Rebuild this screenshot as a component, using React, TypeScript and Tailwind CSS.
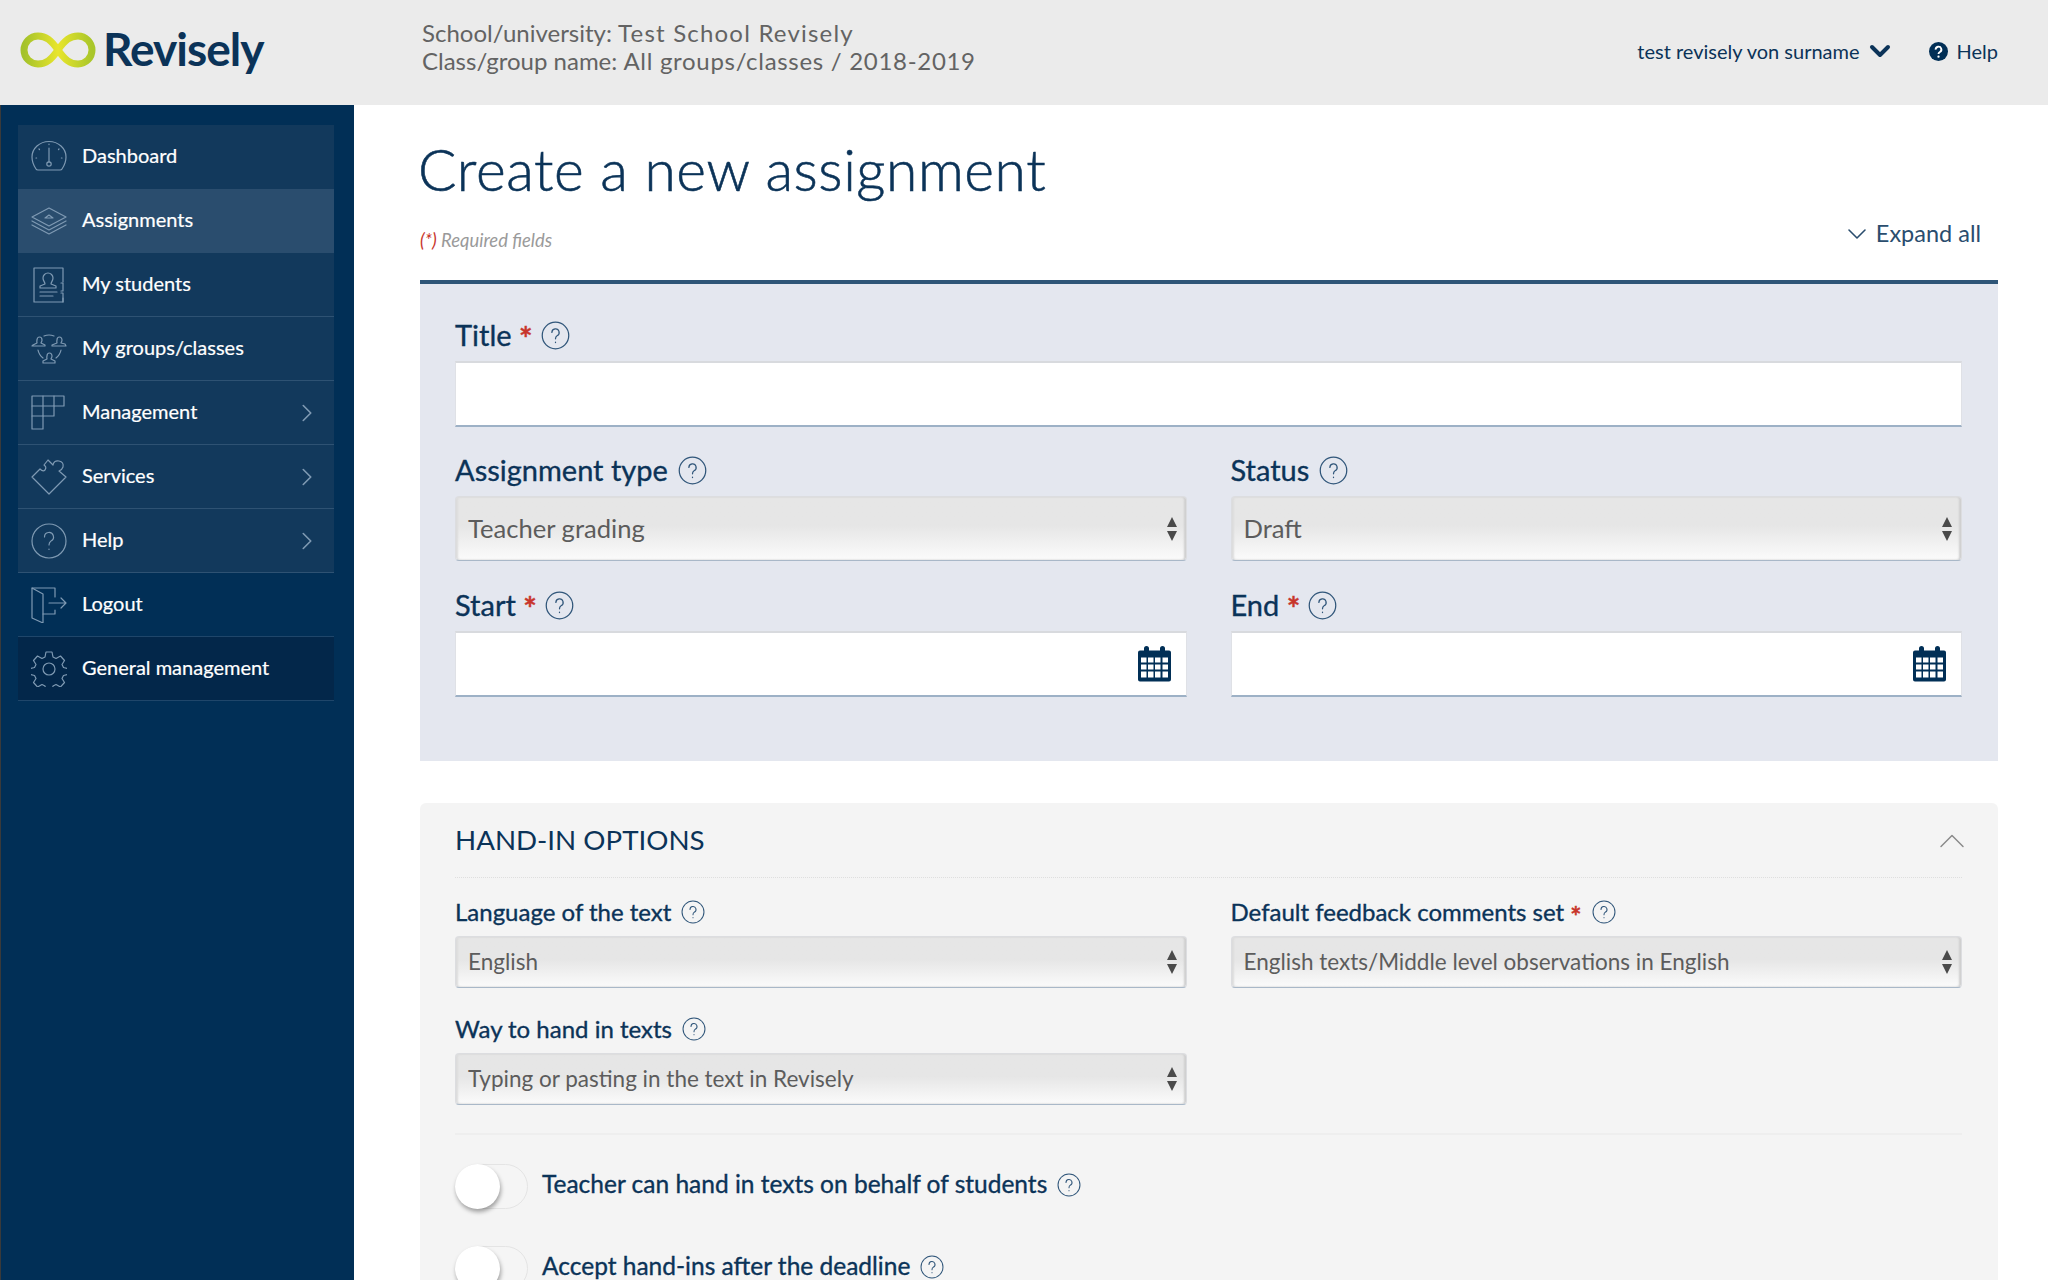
import React from 'react';
import { ChevronRight, ChevronDown, ChevronUp } from 'lucide-react';

const stroke = { fill: 'none', stroke: '#7f9ab3', strokeWidth: 1.2, strokeLinecap: 'round', strokeLinejoin: 'round' } as const;

const Dash = () => (
  <svg width="36" height="36" viewBox="0 0 36 36" {...stroke}>
    <path d="M5 30 Q1 24 1 18 a17 15.5 0 0 1 34 0 Q35 24 31 30 Q30.500 31 29 31 H7 Q5.500 31 5 30Z" />
    <path d="M18 9v14" /><circle cx="18" cy="25" r="2.200" />
    <path d="M18 5v.6M8 10l.5.5M28 10l-.5.5M5 19h.6M31 19h-.6" />
  </svg>
);
const Stack = () => (
  <svg width="36" height="36" viewBox="0 0 36 36" {...stroke}>
    <path d="M1 14 L18 5 L35 14 L18 23Z" /><path d="M14 15 L18 12 L22 15Z" />
    <path d="M1 18 L18 27 L35 18" /><path d="M1 22 L18 31 L35 22" />
  </svg>
);
const Student = () => (
  <svg width="36" height="36" viewBox="0 0 36 36" {...stroke}>
    <path d="M32 15V1H3v34h29v-4" /><path d="M30 16h2v8h-2M30 26h2v9" />
    <path d="M14 17c0-2-2-3-2-6a5 5 0 0 1 10 0c0 3-2 4-2 6l5 2v2H9v-2z" /><path d="M9 25h17M9 29h13" />
  </svg>
);
const Groups = () => (
  <svg width="36" height="36" viewBox="0 0 36 36" {...stroke}>
    <path d="M6 9a2.500 3 0 1 1 5 0c0 2-1 2-1 3l4 2v1H1l1-1 4-2c0-1-.500-1.500 0-3z" />
    <path d="M26 9a2.500 3 0 1 1 5 0c0 2-1 2-1 3l4 1 1 2H21v-1l5-2c0-1-.500-1.500 0-3z" />
    <path d="M16 25a2.500 3 0 1 1 5 0c0 2-1 2-1 3l4 2v2H12v-2l4-2c0-1-.500-1.500 0-3z" />
    <path d="M13 5q5-2 10 0M7 19q1 5 5 8M30 19q-1 5-5 8" />
  </svg>
);
const Grid = () => (
  <svg width="36" height="36" viewBox="0 0 36 36" {...stroke}>
    <path d="M1 1h32v10H23v10H12v13H1z" /><path d="M12 1v20M23 1v10M1 11h22M1 21h11" />
  </svg>
);
const Puzzle = () => (
  <svg width="36" height="36" viewBox="0 0 36 36" {...stroke}>
    <path d="M18 35 L1 18 L9 10 Q12 13 14 11 Q16 8 13 6 L17 1 L22 6 Q23 1 28 2 Q33 3 32 8 Q31 11 28 12 L35 18Z" />
  </svg>
);
const Question = () => (
  <svg width="36" height="36" viewBox="0 0 36 36" {...stroke}>
    <circle cx="18" cy="18" r="17" /><path d="M13.500 14a4.500 4.500 0 1 1 6.500 4c-1.500 1-2 2-2 4" /><path d="M18 26v.5" />
  </svg>
);
const Door = () => (
  <svg width="36" height="36" viewBox="0 0 36 36" {...stroke}>
    <path d="M1 1h23v9M24 23v4H12" /><path d="M1 1l11 6v29L1 31z" /><path d="M18 16h17M30 11l5 5-5 5" />
  </svg>
);
const Gear = () => (
  <svg width="36" height="36" viewBox="0 0 36 36" {...stroke}>
    <circle cx="18" cy="18" r="6" />
    <path d="M15 1h6l1 5 3 1.500 4.500-2.500 4 4.500-2.500 4 1.500 3 4.500 1v6l-4.500 1-1.500 3 2.500 4-4 4.500-4.500-2.500-3 1.500-1 5h-6l-1-5-3-1.500-4.500 2.500-4-4.500 2.500-4-1.500-3-4.500-1v-6l4.500-1 1.500-3-2.500-4 4-4.500 4.500 2.500 3-1.500z" />
  </svg>
);

const navItems = [
  { label: 'Dashboard', icon: <Dash />, bg: 'bg-[#12395c]', border: 'border-transparent' },
  { label: 'Assignments', icon: <Stack />, bg: 'bg-[#2a4d6e]', border: 'border-transparent' },
  { label: 'My students', icon: <Student />, bg: 'bg-[#12395c]', border: 'border-[#2e5273]' },
  { label: 'My groups/classes', icon: <Groups />, bg: 'bg-[#12395c]', border: 'border-[#2e5273]' },
  { label: 'Management', icon: <Grid />, bg: 'bg-[#12395c]', border: 'border-[#2e5273]', arrow: true },
  { label: 'Services', icon: <Puzzle />, bg: 'bg-[#12395c]', border: 'border-[#2e5273]', arrow: true },
  { label: 'Help', icon: <Question />, bg: 'bg-[#12395c]', border: 'border-[#2e5273]', arrow: true },
  { label: 'Logout', icon: <Door />, bg: 'bg-[#012f56]', border: 'border-[#1f466a]' },
  { label: 'General management', icon: <Gear />, bg: 'bg-[#03274a]', border: 'border-[#1f466a]' },
];

const Hint = ({ size = 'w-[27px] h-[27px]' }: { size?: string }) => (
  <svg className={size} viewBox="0 0 28 28" fill="none" stroke="#2f5579" strokeWidth="1.200" strokeLinecap="round">
    <circle cx="14" cy="14" r="12.800" /><path d="M10.500 11a3.500 3.500 0 1 1 5 3.200c-1 .6-1.500 1.300-1.500 3" /><path d="M14 20.500v.3" />
  </svg>
);

const Star = () => (
  <span className="inline-block translate-y-[5px] text-[#c8352b] [-webkit-text-stroke:0.4px_#c8352b] font-bold text-[1.1em] leading-none">*</span>
);

const Label = ({ text, req, small }: { text: string; req?: boolean; small?: boolean }) => (
  <div className={`flex items-center text-[#0b3358] [-webkit-text-stroke:0.35px_#0b3358] ${small ? 'h-6 text-[24px] gap-[10px]' : `h-8 text-[29px] ${req ? 'gap-[8px]' : 'gap-[10px]'}`}`}>
    <span>{text}{req && <> <Star /></>}</span>
    <Hint size={small ? 'w-[24px] h-[24px]' : 'w-[29px] h-[29px]'} />
  </div>
);

const Arrows = () => (
  <svg width="12" height="26" viewBox="0 0 12 26" fill="#4a4a4a" className="shrink-0">
    <path d="M6 1l5 10H1zM1 15h10l-5 10z" />
  </svg>
);

const Select = ({ value, tall }: { value: string; tall?: boolean }) => (
  <div className={`flex items-center justify-between pl-3 pr-[8px] rounded-[4px] border border-[#dcdde0] border-b-[#a9b8c8] bg-gradient-to-b from-[#e6e6e6] from-45% to-[#fbfbfb] shadow-[inset_2px_0_2px_#dcdcdc,inset_-2px_0_2px_#cfcfcf] text-[#5c5c5c] ${tall ? 'h-[65px] text-[25.6px]' : 'h-[52px] text-[22.5px]'}`}>
    <span className="-mt-[1px]">{value}</span>
    <Arrows />
  </div>
);

const Calendar = () => (
  <svg width="33" height="37" viewBox="0 0 33 36" fill="#012f56" className="-mt-[2px]">
    <path d="M2 5h4V3a2.500 2.500 0 0 1 5 0v2h11V3a2.500 2.500 0 0 1 5 0v2h4a2 2 0 0 1 2 2v27a2 2 0 0 1-2 2H2a2 2 0 0 1-2-2V7a2 2 0 0 1 2-2z" />
    <g fill="#fff">
      <rect x="3" y="12" width="5.500" height="5" /><rect x="10" y="12" width="5.500" height="5" /><rect x="17" y="12" width="5.500" height="5" /><rect x="24.500" y="12" width="5.500" height="5" />
      <rect x="3" y="19" width="5.500" height="5" /><rect x="10" y="19" width="5.500" height="5" /><rect x="17" y="19" width="5.500" height="5" /><rect x="24.500" y="19" width="5.500" height="5" />
      <rect x="3" y="26" width="5.500" height="6" /><rect x="10" y="26" width="5.500" height="6" /><rect x="17" y="26" width="5.500" height="6" /><rect x="24.500" y="26" width="5.500" height="6" />
    </g>
  </svg>
);

const DateInput = () => (
  <div className="h-[66px] bg-white border-x border-x-[#dfe1e6] border-t-2 border-t-[#d8dade] border-b-2 border-b-[#9db1c6] flex items-center justify-end pr-[15px]">
    <Calendar />
  </div>
);

const Toggle = () => (
  <div className="relative w-[73px] h-[45px] rounded-full bg-[#f5f5f5] border border-[#e4e4e4] shrink-0">
    <div className="absolute left-[-1px] top-[-1px] w-[45px] h-[45px] rounded-full bg-white shadow-[1px_3px_4px_rgba(0,0,0,0.35)]" />
  </div>
);

const ToggleRow = ({ text }: { text: string }) => (
  <div className="flex items-center gap-[13px] text-[24.500px] text-[#0b3358] [-webkit-text-stroke:0.35px_#0b3358]">
    <Toggle />
    <span className="-mt-[4px] ml-[1px]">{text}</span>
    <span className="-mt-[3px] -ml-[3px] flex"><Hint size="w-[24px] h-[24px]" /></span>
  </div>
);

export default function App() {
  return (
    <div className="w-[2048px] h-[1280px] overflow-hidden bg-white flex flex-col font-[Lato,sans-serif]">
      <header className="h-[105px] shrink-0 bg-[#ebebeb] flex items-center">
        <div className="w-[422px] shrink-0 pl-[20px] flex items-center gap-[7px] -mt-[5px]">
          <svg width="76" height="36" viewBox="0 0 76 36" fill="none">
            <defs>
              <linearGradient id="lg" x1="0" x2="1" y1="0" y2="0">
                <stop offset="0" stopColor="#a4c22a" /><stop offset="0.5" stopColor="#e8e52c" /><stop offset="1" stopColor="#a9c62a" />
              </linearGradient>
            </defs>
            <path d="M38 18C31 8 26 4 18 4A14 14 0 0 0 18 32C26 32 31 28 38 18S50 4 58 4A14 14 0 0 1 58 32C50 32 45 28 38 18Z" stroke="url(#lg)" strokeWidth="7" />
          </svg>
          <span className="text-[#0b3358] text-[46px] font-bold tracking-[-1px] leading-none -mt-[2px]">Revisely</span>
        </div>
        <div className="text-[24px] leading-[28px] text-[#636363] -mt-[11px]">
          <div>School/university: <span className="tracking-[1.2px]">Test School Revisely</span></div>
          <div>Class/group name: <span className="tracking-[0.7px]">All groups/classes / 2018-2019</span></div>
        </div>
        <div className="ml-auto flex items-center pr-[50px] text-[#0b3358] text-[20px] -mt-[3px]">
          <span>test revisely von surname</span>
          <ChevronDown className="w-[32px] h-[32px] ml-[4px]" strokeWidth={3} />
          <svg className="w-[19px] h-[19px] ml-[33px]" viewBox="0 0 20 20"><circle cx="10" cy="10" r="10" fill="#012f56" /><path d="M7 8a3 3 0 1 1 4.500 2.500c-1 .6-1.500 1-1.500 2" fill="none" stroke="#fff" strokeWidth="2" /><circle cx="10" cy="15.500" r="1.200" fill="#fff" /></svg>
          <span className="ml-[9px]">Help</span>
        </div>
      </header>
      <div className="flex flex-1 min-h-0">
        <aside className="w-[354px] shrink-0 bg-[#012f56] border-l border-l-[#3a3a3a] pl-[17px] pr-[20px] pt-[20px]">
          {navItems.map((item) => (
            <div key={item.label} className={`h-[64px] flex items-center pl-[13px] pr-[12px] border-b ${item.bg} ${item.border}`}>
              <span className="w-[36px] h-[36px] shrink-0 flex">{item.icon}</span>
              <span className="ml-[15px] -mt-[3px] text-white text-[20px] [-webkit-text-stroke:0.2px_#ffffff] flex-1">{item.label}</span>
              {item.arrow && <ChevronRight className="w-[30px] h-[30px] text-[#7f9ab3]" strokeWidth={1.300} />}
            </div>
          ))}
        </aside>
        <main className="flex-1 min-w-0 pl-[66px] pr-[50px]">
          <h1 className="text-[57px] leading-[64px] mt-[32px] -ml-[2px] text-[#0b3358] font-light tracking-[0.55px] [-webkit-text-stroke:0.6px_#0b3358]">Create a new assignment</h1>
          <div className="flex items-center justify-between h-[36px] mt-[15px]">
            <span className="text-[18.400px] italic text-[#9a9a9a] mt-[13px]"><span className="text-[#c8352b]">(*)</span> Required fields</span>
            <span className="flex items-center gap-[3px] text-[23.500px] text-[#2a4d6e] pr-[17px]">
              <ChevronDown className="w-[32px] h-[32px]" strokeWidth={1.200} />Expand all
            </span>
          </div>
          <section className="mt-[28px] border-t-4 border-t-[#2e5577] bg-[#e4e7ef] pl-[35px] pr-[36px] pt-[35px] h-[481px]">
            <Label text="Title" req />
            <div className="h-[66px] mt-[10px] bg-white border-x border-x-[#dfe1e6] border-t-2 border-t-[#d8dade] border-b-2 border-b-[#9db1c6]" />
            <div className="grid grid-cols-2 gap-x-[44px] mt-[27px]">
              <div>
                <Label text="Assignment type" />
                <div className="mt-[10px]"><Select value="Teacher grading" tall /></div>
              </div>
              <div>
                <Label text="Status" />
                <div className="mt-[10px]"><Select value="Draft" tall /></div>
              </div>
              <div className="mt-[28px]">
                <Label text="Start" req />
                <div className="mt-[10px]"><DateInput /></div>
              </div>
              <div className="mt-[28px]">
                <Label text="End" req />
                <div className="mt-[10px]"><DateInput /></div>
              </div>
            </div>
          </section>
          <section className="mt-[42px] h-[600px] bg-[#f4f4f4] rounded-t-[6px] pl-[35px] pr-[36px]">
            <div className="relative h-[75px] flex items-center border-b border-dotted border-[#dedede] text-[#0b3358] text-[27.700px]">
              HAND-IN OPTIONS
              <ChevronUp className="absolute right-[-12px] top-[16px] w-[44px] h-[44px] text-[#8a8a8a]" strokeWidth={0.800} />
            </div>
            <div className="grid grid-cols-2 gap-x-[44px] mt-[22px]">
              <div>
                <Label text="Language of the text" small />
                <div className="mt-[12px]"><Select value="English" /></div>
              </div>
              <div>
                <Label text="Default feedback comments set" req small />
                <div className="mt-[12px]"><Select value="English texts/Middle level observations in English" /></div>
              </div>
              <div className="mt-[29px]">
                <Label text="Way to hand in texts" small />
                <div className="mt-[12px]"><Select value="Typing or pasting in the text in Revisely" /></div>
              </div>
            </div>
            <div className="mt-[28px] border-t-2 border-[#eeeeee] pt-[29px] flex flex-col gap-[37px]">
              <ToggleRow text="Teacher can hand in texts on behalf of students" />
              <ToggleRow text="Accept hand-ins after the deadline" />
            </div>
          </section>
        </main>
      </div>
    </div>
  );
}
